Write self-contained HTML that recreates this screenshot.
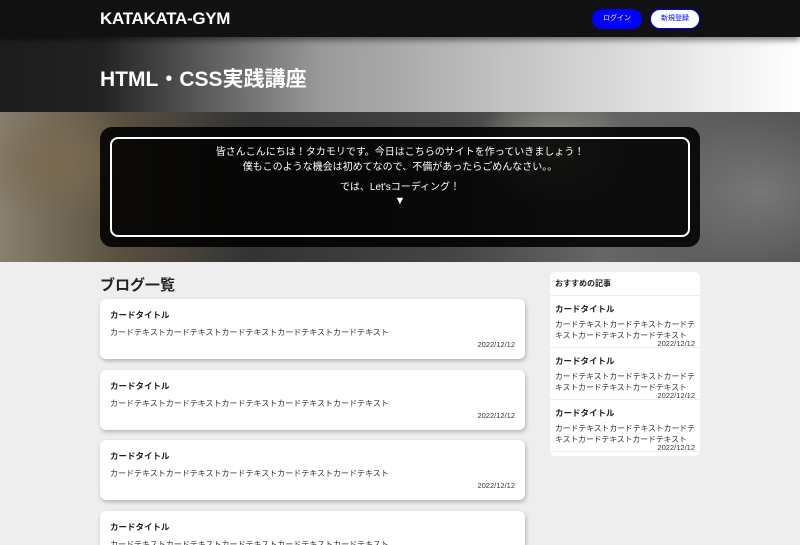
<!DOCTYPE html><html><head><meta charset="utf-8"><style>
*{margin:0;padding:0;box-sizing:border-box}
html{width:800px;height:545px;overflow:hidden}
body{width:800px;height:545px;overflow:hidden;background:#eee;font-family:"Liberation Sans","Noto Sans CJK JP",sans-serif;position:relative}
.hd{position:absolute;left:0;top:0;width:800px;height:37px;background:#111;box-shadow:0 3px 6px rgba(0,0,0,.5);z-index:2}
.logo{position:absolute;left:100px;top:9px;color:#fff;font-size:17px;font-weight:bold;letter-spacing:-.3px}
.b1,.b2{position:absolute;top:9px;height:20px;border-radius:10px;font-size:7px;line-height:18px;text-align:center}
.b1{left:592px;width:50px;background:#00f;color:#fff;border:1px solid #00f}
.b2{left:650px;width:50px;background:#fff;color:#00f;border:1.5px solid #00f}
.tb{position:absolute;left:0;top:37px;width:800px;height:75px;background:linear-gradient(90deg,#1c1c1c 0,#222 100px,#999 320px,#ccc 550px,#fff 800px)}
.tb h1{position:absolute;left:100px;top:26px;color:#fff;font-size:21px;font-weight:bold}
.hero{position:absolute;left:0;top:112px;width:800px;height:150px;background:
radial-gradient(ellipse 90px 60px at 60px 50px,#7a6a50,transparent),
radial-gradient(ellipse 120px 80px at 760px 80px,#777,transparent),
radial-gradient(ellipse 80px 60px at 550px 40px,#998,transparent),
linear-gradient(90deg,#8a8070 0,#5a5040 120px,#333 250px,#444 450px,#666 600px,#555 800px)}
.box{position:absolute;left:100px;top:127px;width:600px;height:120px;background:rgba(0,0,0,.88);border-radius:12px}
.in{position:absolute;left:10px;top:10px;width:580px;height:100px;border:2px solid #fff;border-radius:8px;color:#fff;text-align:center;font-size:10px;line-height:15px;padding-top:6px}
h2{position:absolute;left:100px;top:274px;font-size:15px;font-weight:bold;color:#222}
.card{position:absolute;left:100px;width:425px;height:60px;background:#fff;border-radius:6px;box-shadow:1px 2px 4px rgba(0,0,0,.25)}
.card .t{position:absolute;left:10px;top:10px;font-size:8.5px;font-weight:bold;color:#222}
.card .x{position:absolute;left:10px;top:28px;font-size:8px;color:#333}
.card .d{position:absolute;right:10px;top:41px;font-size:7.5px;color:#333}
.side{position:absolute;left:550px;top:272px;width:150px;height:184px;background:#fff;border-radius:5px}
.sh{height:24px;border-bottom:1px solid #eee;font-size:8px;font-weight:bold;padding:6px 5px;color:#222}
.it{height:52px;border-bottom:1px solid #eee;padding:7px 5px 0;color:#222;position:relative}
.it .t{font-size:8.5px;font-weight:bold}
.it .x{font-size:7.8px;line-height:11px;margin-top:4px;color:#333}
.it .d{position:absolute;right:5px;top:43px;font-size:7.5px;color:#333}
</style></head><body>
<div class="hd"><div class="logo">KATAKATA-GYM</div><div class="b1">ログイン</div><div class="b2">新規登録</div></div>
<div class="tb"><h1>HTML・CSS実践講座</h1></div>
<div class="hero"></div>
<div class="box"><div class="in">皆さんこんにちは！タカモリです。今日はこちらのサイトを作っていきましょう！<br>僕もこのような機会は初めてなので、不備があったらごめんなさい。。<div style="margin-top:5px">では、Let'sコーディング！</div><div style="font-size:11px;line-height:12px">▼</div></div></div>
<h2>ブログ一覧</h2>
<div class="card" style="top:299px"><div class="t">カードタイトル</div><div class="x">カードテキストカードテキストカードテキストカードテキストカードテキスト</div><div class="d">2022/12/12</div></div>
<div class="card" style="top:370px"><div class="t">カードタイトル</div><div class="x">カードテキストカードテキストカードテキストカードテキストカードテキスト</div><div class="d">2022/12/12</div></div>
<div class="card" style="top:440px"><div class="t">カードタイトル</div><div class="x">カードテキストカードテキストカードテキストカードテキストカードテキスト</div><div class="d">2022/12/12</div></div>
<div class="card" style="top:511px;height:34px;border-radius:6px 6px 0 0"><div class="t">カードタイトル</div><div class="x">カードテキストカードテキストカードテキストカードテキストカードテキスト</div></div>
<div class="side"><div class="sh">おすすめの記事</div>
<div class="it"><div class="t">カードタイトル</div><div class="x">カードテキストカードテキストカードテキストカードテキストカードテキスト</div><div class="d">2022/12/12</div></div>
<div class="it"><div class="t">カードタイトル</div><div class="x">カードテキストカードテキストカードテキストカードテキストカードテキスト</div><div class="d">2022/12/12</div></div>
<div class="it"><div class="t">カードタイトル</div><div class="x">カードテキストカードテキストカードテキストカードテキストカードテキスト</div><div class="d">2022/12/12</div></div>
</div>
</body></html>
